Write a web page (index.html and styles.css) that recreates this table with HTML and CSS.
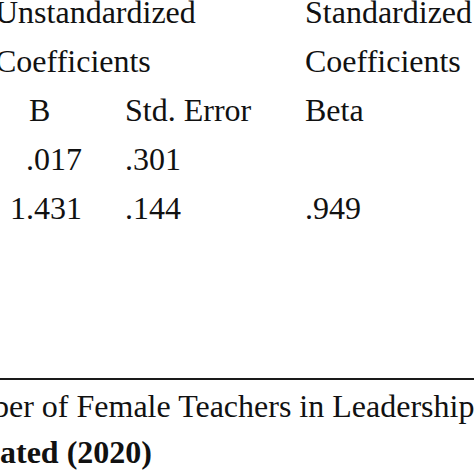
FILE: index.html
```html
<!DOCTYPE html>
<html>
<head>
<meta charset="utf-8">
<link rel="stylesheet" href="styles.css">
</head>
<body>
<div class="page">
  <div class="table">
    <div class="cell span2">Unstandardized</div>
    <div class="cell">Standardized</div>
    <div class="cell span2">Coefficients</div>
    <div class="cell">Coefficients</div>
    <div class="cell b-head">B</div>
    <div class="cell">Std. Error</div>
    <div class="cell">Beta</div>
    <div class="cell num">.017</div>
    <div class="cell">.301</div>
    <div class="cell"></div>
    <div class="cell num">1.431</div>
    <div class="cell">.144</div>
    <div class="cell">.949</div>
  </div>
  <div class="rule"></div>
  <div class="caption">
    <div class="title">ber of Female Teachers in Leadership Position</div>
    <div class="source">ated (2020)</div>
  </div>
</div>
</body>
</html>
```

FILE: styles.css
```css
html, body {
  margin: 0;
  padding: 0;
  background: #ffffff;
}

.page {
  width: 474px;
  height: 474px;
  overflow: hidden;
  font-family: "Liberation Serif", "Times New Roman", serif;
  font-size: 32px;
  color: #111111;
}

.table {
  display: grid;
  grid-template-columns: 130px 180px 200px;
  margin-left: -5px;
  margin-top: -12px;
  line-height: 49px;
  white-space: nowrap;
}

.cell {
  white-space: nowrap;
}

.span2 {
  grid-column: span 2;
}

.b-head {
  padding-left: 34px;
}

.num {
  text-align: right;
  padding-right: 43px;
}

.rule {
  margin-top: 145px;
  height: 2px;
  background: #1a1a1a;
  width: 474px;
}

.caption {
  margin-top: 3px;
  line-height: 46px;
  white-space: nowrap;
}

.title {
  margin-left: -7px;
}

.source {
  font-weight: bold;
  margin-left: 0;
}
```
